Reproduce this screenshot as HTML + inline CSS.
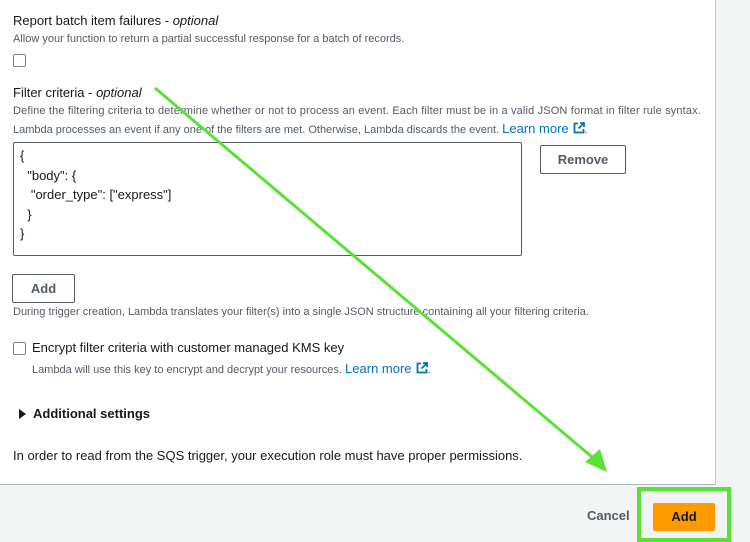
<!DOCTYPE html>
<html><head><style>
body{margin:0;width:750px;height:542px;overflow:hidden;background:#f2f3f3;font-family:"Liberation Sans",sans-serif;color:#16191f;position:relative}
.panel{position:absolute;left:0;top:0;width:715px;height:484px;background:#fff;border-right:1px solid #c6c6c6;border-bottom:1px solid #aab7b8}
.a{position:absolute;white-space:nowrap}
.lbl{font-size:13px}
.desc{font-size:11px;color:#545b64}
.link{color:#0073bb;font-size:13px}
.cb{position:absolute;width:11px;height:11px;border:1px solid #7d8998;border-radius:2px;background:#fff}
.btn{position:absolute;border:1px solid #545b64;border-radius:2px;background:#fff;font-weight:bold;font-size:13px;color:#545b64;text-align:center;box-sizing:border-box}
.ext{display:inline-block;vertical-align:-1px;margin-left:4px}
</style></head><body>
<div class="panel"></div>
<div class="a lbl" style="left:13px;top:13px">Report batch item failures - <i>optional</i></div>
<div class="a desc" style="left:13px;top:33px">Allow your function to return a partial successful response for a batch of records.</div>
<div class="cb" style="left:13px;top:54px"></div>
<div class="a lbl" style="left:13px;top:85px">Filter criteria - <i>optional</i></div>
<div class="a desc" style="left:13px;top:105px;letter-spacing:0.15px">Define the filtering criteria to determine whether or not to process an event. Each filter must be in a valid JSON format in filter rule syntax.</div>
<div class="a desc" style="left:13px;top:121px">Lambda processes an event if any one of the filters are met. Otherwise, Lambda discards the event. <span class="link">Learn more</span><svg class="ext" width="12" height="12" viewBox="0 0 12 12"><path d="M5 1.5H1.5v9h9V7" fill="none" stroke="#0073bb" stroke-width="1.8"/><path d="M7 1h4v4M11 1L5.5 6.5" fill="none" stroke="#0073bb" stroke-width="1.8"/></svg>.</div>
<div style="position:absolute;left:13px;top:142px;width:509px;height:114px;border:1px solid #545b64;border-radius:2px;box-sizing:border-box"></div>
<div class="a" style="left:20px;top:146px;font-size:13px;line-height:19.5px">{<br>&nbsp;&nbsp;"body": {<br>&nbsp;&nbsp;&nbsp;"order_type": ["express"]<br>&nbsp;&nbsp;}<br>}</div>
<div class="btn" style="left:540px;top:145px;width:86px;height:29px;line-height:27px">Remove</div>
<div class="btn" style="left:12px;top:274px;width:63px;height:29px;line-height:27px">Add</div>
<div class="a desc" style="left:13px;top:306px">During trigger creation, Lambda translates your filter(s) into a single JSON structure containing all your filtering criteria.</div>
<div class="cb" style="left:13px;top:342px"></div>
<div class="a lbl" style="left:32px;top:340px">Encrypt filter criteria with customer managed KMS key</div>
<div class="a desc" style="left:32px;top:361px">Lambda will use this key to encrypt and decrypt your resources. <span class="link">Learn more</span><svg class="ext" width="12" height="12" viewBox="0 0 12 12"><path d="M5 1.5H1.5v9h9V7" fill="none" stroke="#0073bb" stroke-width="1.8"/><path d="M7 1h4v4M11 1L5.5 6.5" fill="none" stroke="#0073bb" stroke-width="1.8"/></svg>.</div>
<div class="a" style="left:19px;top:409px;width:0;height:0;border-left:7px solid #16191f;border-top:5px solid transparent;border-bottom:5px solid transparent"></div>
<div class="a lbl" style="left:33px;top:406px;font-weight:bold">Additional settings</div>
<div class="a lbl" style="left:13px;top:448px">In order to read from the SQS trigger, your execution role must have proper permissions.</div>
<div class="a" style="left:587px;top:508px;font-size:13px;font-weight:bold;color:#545b64">Cancel</div>
<div style="position:absolute;left:637px;top:487px;width:94px;height:55px;border:4px solid #5ae136;box-sizing:border-box"></div>
<div style="position:absolute;left:653px;top:503px;width:62px;height:28px;background:#ff9900;border-radius:2px;font-size:13px;font-weight:bold;text-align:center;line-height:28px">Add</div>
<svg style="position:absolute;left:0;top:0" width="750" height="542"><line x1="155" y1="88" x2="592" y2="457" stroke="#5ae136" stroke-width="3"/><polygon points="607,472 585,462 600,449" fill="#5ae136"/></svg>
</body></html>
